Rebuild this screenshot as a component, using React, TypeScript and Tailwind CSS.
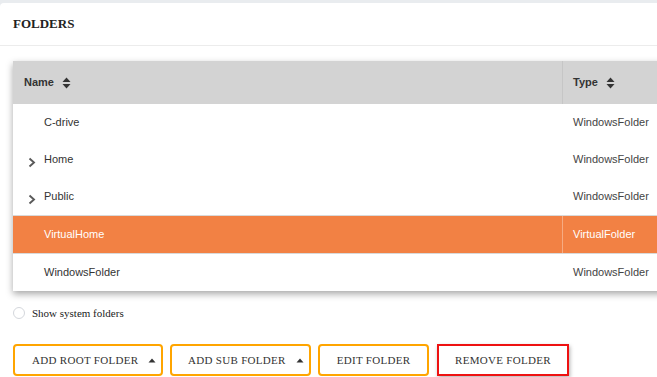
import React from "react";

const SortIcon = () => (
  <svg width="9" height="12" viewBox="0 0 9 12" className="ml-[8px]">
    <path d="M4.5 0.5 L8.5 5 H0.5 Z" fill="#333" />
    <path d="M4.5 11.5 L8.5 7 H0.5 Z" fill="#333" />
  </svg>
);

const Chevron = () => (
  <svg width="8" height="11" viewBox="0 0 8 11" className="absolute left-[15px] top-[16px]">
    <path d="M1.5 1.5 L6 5.5 L1.5 9.5" fill="none" stroke="#5a5a5a" strokeWidth="1.9" />
  </svg>
);

const Caret = () => (
  <svg width="8" height="5" viewBox="0 0 8 5" className="ml-[10px]">
    <path d="M4 0.5 L7.5 4.5 H0.5 Z" fill="#333" />
  </svg>
);

type Row = { name: string; type: string; expandable?: boolean; selected?: boolean };

const rows: Row[] = [
  { name: "C-drive", type: "WindowsFolder" },
  { name: "Home", type: "WindowsFolder", expandable: true },
  { name: "Public", type: "WindowsFolder", expandable: true },
  { name: "VirtualHome", type: "VirtualFolder", selected: true },
  { name: "WindowsFolder", type: "WindowsFolder" },
];

export default function App() {
  const serif = { fontFamily: '"Liberation Serif", "Times New Roman", serif' };
  const sans = { fontFamily: '"Liberation Sans", Arial, sans-serif' };
  return (
    <div className="w-[657px] h-[377px] overflow-hidden bg-[#e9ecef] pt-[3px]">
      <div className="bg-white rounded-tl-[4px] h-[374px] flex flex-col">
        <div className="h-[43px] border-b border-[#ececec] flex items-center px-[13px]">
          <span className="text-[13px] font-bold text-[#222] leading-none pb-[2px]" style={serif}>
            FOLDERS
          </span>
        </div>
        <div className="ml-[13px] mt-[15px] w-[660px] shadow-[0_3px_7px_rgba(0,0,0,0.35)] bg-white" style={sans}>
          <div className="flex h-[43px] bg-[#d3d3d3] text-[11px] font-bold text-[#333]">
            <div className="w-[550px] flex items-center pl-[11px] border-r border-[#c6c6c6]">
              Name
              <SortIcon />
            </div>
            <div className="flex-1 flex items-center pl-[10px]">
              Type
              <SortIcon />
            </div>
          </div>
          {rows.map((r) => (
            <div
              key={r.name}
              className={
                r.selected
                  ? "flex h-[39px] bg-[#f28144] text-white text-[11px] border-y border-[#d9d9d9]"
                  : "flex h-[37px] text-[11px] text-[#333]"
              }
            >
              <div
                className={
                  r.selected
                    ? "relative w-[550px] flex items-center pl-[31px] border-r border-[#f6ab82]"
                    : "relative w-[550px] flex items-center pl-[31px]"
                }
              >
                {r.expandable && <Chevron />}
                {r.name}
              </div>
              <div className={r.selected ? "flex-1 flex items-center pl-[10px]" : "flex-1 flex items-center pl-[10px] text-[#444]"}>
                {r.type}
              </div>
            </div>
          ))}
        </div>
        <div className="flex items-center ml-[13px] mt-[16px] h-[12px]">
          <span className="w-[12px] h-[12px] rounded-full border-[1.5px] border-[#d4d7dc] bg-white" />
          <span className="ml-[7px] text-[11px] text-[#222]" style={serif}>
            Show system folders
          </span>
        </div>
        <div className="flex ml-[13px] mt-[25px] gap-[7px] text-[11px] text-[#333] tracking-[0.3px]" style={serif}>
          <button className="h-[32px] w-[150px] border-2 border-[#ffa500] rounded-[4px] flex items-center pl-[17px] bg-white">
            ADD ROOT FOLDER
            <Caret />
          </button>
          <button className="h-[32px] w-[141px] border-2 border-[#ffa500] rounded-[4px] flex items-center pl-[16px] bg-white">
            ADD SUB FOLDER
            <Caret />
          </button>
          <button className="h-[32px] w-[111px] border-2 border-[#ffa500] rounded-[4px] flex items-center justify-center bg-white">
            EDIT FOLDER
          </button>
          <button className="ml-[1px] h-[32px] w-[132px] border-2 border-[#ee1111] flex items-center justify-center bg-white shadow-[1px_2px_4px_rgba(0,0,0,0.3)]">
            REMOVE FOLDER
          </button>
        </div>
      </div>
    </div>
  );
}
